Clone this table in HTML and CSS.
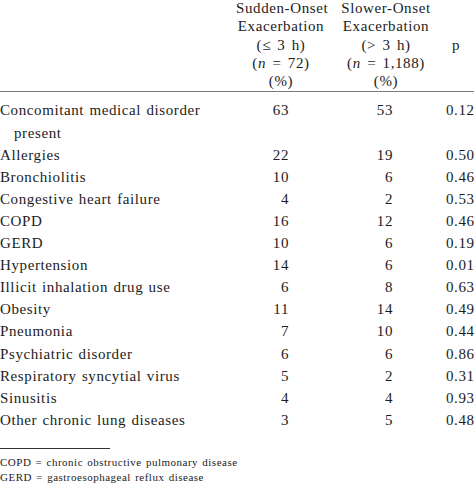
FILE: index.html
```html
<!DOCTYPE html>
<html>
<head>
<meta charset="utf-8">
<link rel="stylesheet" href="styles.css">
</head>
<body>
<div class="page">
  <table class="data">
    <colgroup>
      <col class="c-label">
      <col class="c-sudden">
      <col class="c-slower">
      <col class="c-p">
    </colgroup>
    <thead>
      <tr>
        <th class="h-label"></th>
        <th class="h-num">Sudden-Onset<br>Exacerbation<br>(≤ 3 h)<br>(<i>n</i> = 72)<br>(%)</th>
        <th class="h-num">Slower-Onset<br>Exacerbation<br>(&gt; 3 h)<br>(<i>n</i> = 1,188)<br>(%)</th>
        <th class="h-p">p</th>
      </tr>
    </thead>
    <tbody>
      <tr class="first"><td class="label">Concomitant medical disorder present</td><td class="n1">63</td><td class="n2">53</td><td class="pv">0.12</td></tr>
      <tr><td class="label">Allergies</td><td class="n1">22</td><td class="n2">19</td><td class="pv">0.50</td></tr>
      <tr><td class="label">Bronchiolitis</td><td class="n1">10</td><td class="n2">6</td><td class="pv">0.46</td></tr>
      <tr><td class="label">Congestive heart failure</td><td class="n1">4</td><td class="n2">2</td><td class="pv">0.53</td></tr>
      <tr><td class="label">COPD</td><td class="n1">16</td><td class="n2">12</td><td class="pv">0.46</td></tr>
      <tr><td class="label">GERD</td><td class="n1">10</td><td class="n2">6</td><td class="pv">0.19</td></tr>
      <tr><td class="label">Hypertension</td><td class="n1">14</td><td class="n2">6</td><td class="pv">0.01</td></tr>
      <tr><td class="label">Illicit inhalation drug use</td><td class="n1">6</td><td class="n2">8</td><td class="pv">0.63</td></tr>
      <tr><td class="label">Obesity</td><td class="n1">11</td><td class="n2">14</td><td class="pv">0.49</td></tr>
      <tr><td class="label">Pneumonia</td><td class="n1">7</td><td class="n2">10</td><td class="pv">0.44</td></tr>
      <tr><td class="label">Psychiatric disorder</td><td class="n1">6</td><td class="n2">6</td><td class="pv">0.86</td></tr>
      <tr><td class="label">Respiratory syncytial virus</td><td class="n1">5</td><td class="n2">2</td><td class="pv">0.31</td></tr>
      <tr><td class="label">Sinusitis</td><td class="n1">4</td><td class="n2">4</td><td class="pv">0.93</td></tr>
      <tr><td class="label">Other chronic lung diseases</td><td class="n1">3</td><td class="n2">5</td><td class="pv">0.48</td></tr>
    </tbody>
  </table>
  <div class="notes">
    <div class="note-rule"></div>
    <p class="note">COPD = chronic obstructive pulmonary disease</p>
    <p class="note">GERD = gastroesophageal reflux disease</p>
  </div>
</div>
</body>
</html>
```

FILE: styles.css
```css
html, body {
  margin: 0;
  padding: 0;
  background: #ffffff;
  overflow: hidden;
}

.page {
  width: 474px;
  height: 484px;
  overflow: hidden;
  font-family: "Liberation Serif", "Times New Roman", serif;
  color: #1c1c1c;
  font-size: 15px;
  letter-spacing: 0.6px;
  word-spacing: 1px;
}

.data {
  border-collapse: collapse;
  table-layout: fixed;
  width: 530px;
  margin-top: -1px;
}

.c-label { width: 236px; }
.c-sudden { width: 90px; }
.c-slower { width: 120px; }
.c-p { width: 84px; }

.data th {
  font-weight: normal;
  line-height: 18.3px;
  padding: 0 0 1px 0;
  vertical-align: middle;
  border-bottom: 1.5px solid #7a7a7a;
}

.h-num {
  text-align: center;
  white-space: nowrap;
  word-spacing: 2px;
}

.h-p {
  text-align: left;
  padding-left: 6px !important;
}

.data td {
  line-height: 22.1px;
  padding: 0;
  vertical-align: top;
  white-space: nowrap;
}

.data tr.first td {
  padding-top: 7px;
}

.label {
  white-space: normal !important;
  padding-left: 14px !important;
  text-indent: -14px;
}

.n1 {
  text-align: right;
  padding-right: 37px !important;
}

.n2 {
  text-align: right;
  padding-right: 53px !important;
}

.pv {
  text-align: left;
  padding-left: 0;
}

.notes {
  margin-top: 17px;
}

.note-rule {
  width: 110px;
  border-top: 1px solid #333;
  margin-bottom: 6px;
}

.note {
  margin: 0;
  font-size: 11px;
  line-height: 15px;
  letter-spacing: 0.5px;
  word-spacing: 1px;
}
```
